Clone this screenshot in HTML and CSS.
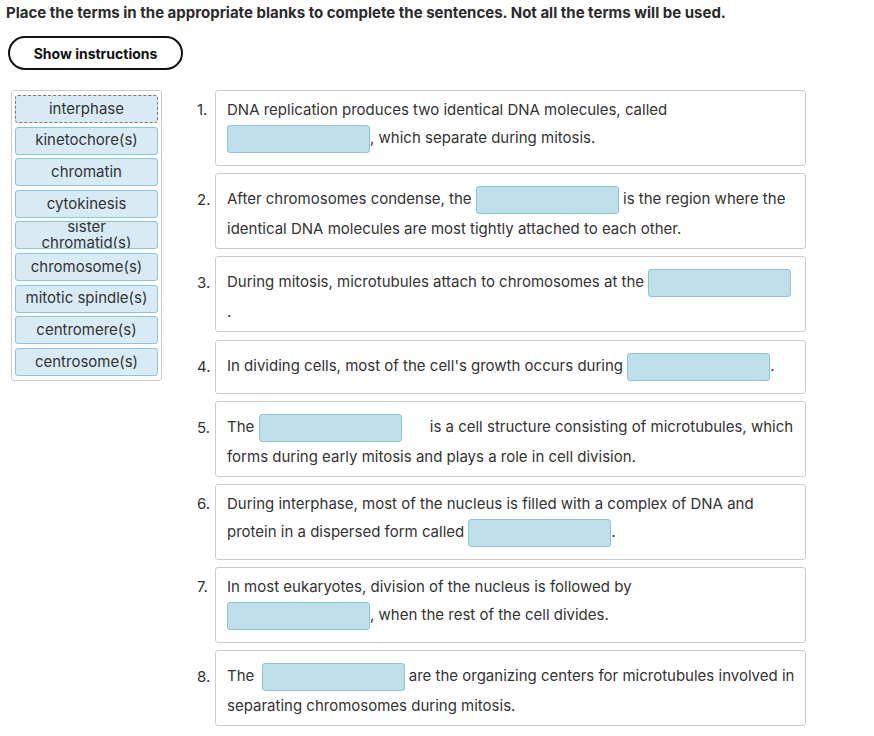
FILE: index.html
```html
<!DOCTYPE html>
<html>
<head>
<meta charset="utf-8">
<link rel="stylesheet" href="styles.css">
</head>
<body>
<h1 class="title">Place the terms in the appropriate blanks to complete the sentences. Not all the terms will be used.</h1>
<button class="instr-btn">Show instructions</button>
<div class="layout">
  <div class="bank">
    <div class="term focused">interphase</div>
    <div class="term">kinetochore(s)</div>
    <div class="term">chromatin</div>
    <div class="term">cytokinesis</div>
    <div class="term">sister chromatid(s)</div>
    <div class="term">chromosome(s)</div>
    <div class="term">mitotic spindle(s)</div>
    <div class="term">centromere(s)</div>
    <div class="term">centrosome(s)</div>
  </div>
  <ol class="questions">
    <li class="q"><span class="num">1.</span><div class="qbox">DNA replication produces two identical DNA molecules, called <span class="blank"></span>, which separate during mitosis.</div></li>
    <li class="q"><span class="num num-blank">2.</span><div class="qbox">After chromosomes condense, the <span class="blank"></span> is the region where the identical DNA molecules are most tightly attached to each other.</div></li>
    <li class="q"><span class="num num-blank">3.</span><div class="qbox">During mitosis, microtubules attach to chromosomes at the <span class="blank"></span><br>.</div></li>
    <li class="q"><span class="num num-blank">4.</span><div class="qbox">In dividing cells, most of the cell's growth occurs during <span class="blank"></span>.</div></li>
    <li class="q"><span class="num num-blank">5.</span><div class="qbox">The <span class="blank blank-wide"></span> is a cell structure consisting of microtubules, which forms during early mitosis and plays a role in cell division.</div></li>
    <li class="q"><span class="num">6.</span><div class="qbox">During interphase, most of the nucleus is filled with a complex of DNA and protein in a dispersed form called <span class="blank"></span>.</div></li>
    <li class="q"><span class="num">7.</span><div class="qbox">In most eukaryotes, division of the nucleus is followed by<br><span class="blank"></span>, when the rest of the cell divides.</div></li>
    <li class="q"><span class="num num-blank">8.</span><div class="qbox">The <span class="blank blank-shift"></span> are the organizing centers for microtubules involved in separating chromosomes during mitosis.</div></li>
  </ol>
</div>
</body>
</html>
```

FILE: styles.css
```css
* { box-sizing: border-box; }
body {
  margin: 0;
  padding: 0 6px;
  font-family: Inter, "Noto Sans", sans-serif;
  color: #333;
  background: #fff;
}
.title {
  margin: 3px 0 0 0;
  font-size: 15px;
  line-height: 19px;
  font-weight: 700;
  color: #2b2b2b;
}
.instr-btn {
  display: block;
  margin: 14px 0 0 2px;
  width: 175px;
  height: 34px;
  border: 2px solid #111;
  border-radius: 17px;
  background: #fff;
  font-family: Inter, "Noto Sans", sans-serif;
  font-size: 14px;
  font-weight: 700;
  color: #111;
}
.layout {
  display: flex;
  align-items: flex-start;
  margin-top: 20px;
}
.bank {
  margin-left: 5px;
  width: 151px;
  border: 1px solid #ccc;
  border-radius: 3px;
  padding: 4px 3px 4px 3px;
  display: flex;
  flex-direction: column;
  gap: 3.6px;
}
.term {
  height: 28px;
  padding: 0 8px;
  background: #d8ebf5;
  border: 1px solid #8cc4db;
  border-radius: 3px;
  font-size: 15px;
  line-height: 16.5px;
  color: #333;
  text-align: center;
  display: flex;
  align-items: center;
  justify-content: center;
  overflow: hidden;
}
.term.focused {
  border: 1px dashed #777;
}
.questions {
  list-style: none;
  margin: 0 0 0 35px;
  padding: 0;
  display: flex;
  flex-direction: column;
  gap: 7.2px;
  width: 609px;
}
.q {
  display: flex;
  align-items: flex-start;
}
.num {
  width: 18px;
  flex: none;
  font-size: 15px;
  padding-top: 9px;
  line-height: 22px;
  color: #333;
}
.num.num-blank {
  padding-top: 16px;
}
.qbox {
  flex: 1;
  border: 1px solid #ccc;
  border-radius: 3px;
  padding: 8px 8px 8px 11px;
  font-size: 15px;
  line-height: 22px;
  color: #333;
}
.blank {
  display: inline-block;
  width: 143px;
  height: 28px;
  margin: 4px 0;
  vertical-align: middle;
  background: #bfdfea;
  border: 1px solid #8cc4db;
  border-radius: 3px;
}
.blank-wide { margin-right: 24px; }
.blank-shift { margin-left: 3px; }
```
